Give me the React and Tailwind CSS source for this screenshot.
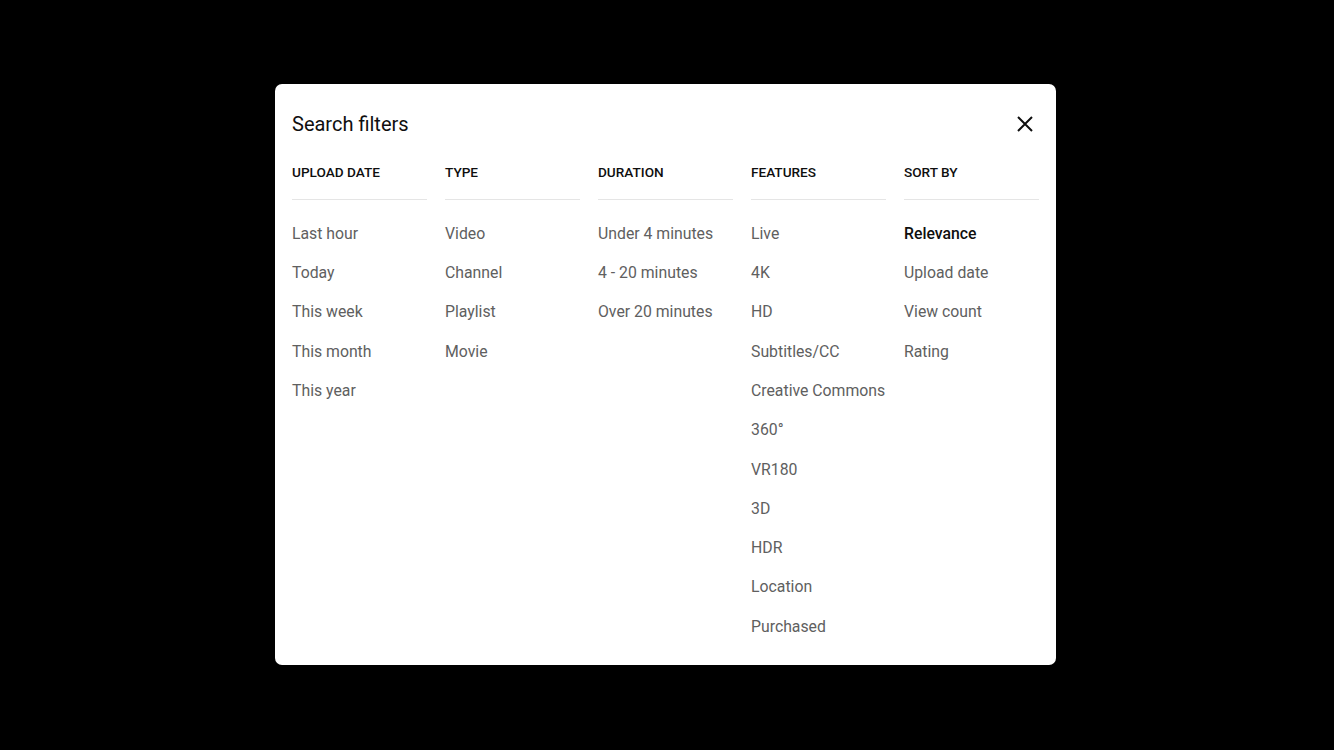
import React from 'react';

const columns = [
  { title: 'Upload date', items: ['Last hour', 'Today', 'This week', 'This month', 'This year'] },
  { title: 'Type', items: ['Video', 'Channel', 'Playlist', 'Movie'] },
  { title: 'Duration', items: ['Under 4 minutes', '4 - 20 minutes', 'Over 20 minutes'] },
  {
    title: 'Features',
    items: ['Live', '4K', 'HD', 'Subtitles/CC', 'Creative Commons', '360°', 'VR180', '3D', 'HDR', 'Location', 'Purchased'],
  },
  { title: 'Sort by', items: ['Relevance', 'Upload date', 'View count', 'Rating'], active: 'Relevance' },
];

const App = () => {
  return (
    <div className="w-full h-[750px] bg-black pt-[84px] pl-[275px] font-['Roboto',_'Liberation_Sans',_sans-serif]">
      <div className="w-[781px] h-[581px] bg-white rounded-[7px] px-[17px] pt-[26px] flex flex-col">
        {/* header */}
        <div className="flex items-center justify-between h-[28px]">
          <h2 className="text-[20px] leading-[28px] text-[#0f0f0f]">Search filters</h2>
          <button className="w-[24px] h-[24px] mr-[2px] flex items-center justify-center text-[#0f0f0f]">
            <svg viewBox="0 0 24 24" width="24" height="24" fill="none" stroke="currentColor" strokeWidth="2">
              <path d="M5 5 L19 19 M19 5 L5 19" />
            </svg>
          </button>
        </div>

        {/* columns */}
        <div className="flex gap-[18px] mt-[24px]">
          {columns.map((col) => (
            <div key={col.title} className="w-[135px] flex flex-col">
              <div className="h-[20px] leading-[20px] text-[13.6px] font-medium uppercase text-[#0f0f0f] whitespace-nowrap">
                {col.title}
              </div>
              <div className="mt-[17px] border-b border-[#e5e5e5]" />
              <div className="mt-[14px] flex flex-col">
                {col.items.map((item) => (
                  <div
                    key={item}
                    className={`h-[39.3px] flex items-center text-[15.8px] whitespace-nowrap ${
                      col.active === item ? 'text-[#0f0f0f] font-medium' : 'text-[#606060]'
                    }`}
                  >
                    {item}
                  </div>
                ))}
              </div>
            </div>
          ))}
        </div>
      </div>
    </div>
  );
};

export default App;
